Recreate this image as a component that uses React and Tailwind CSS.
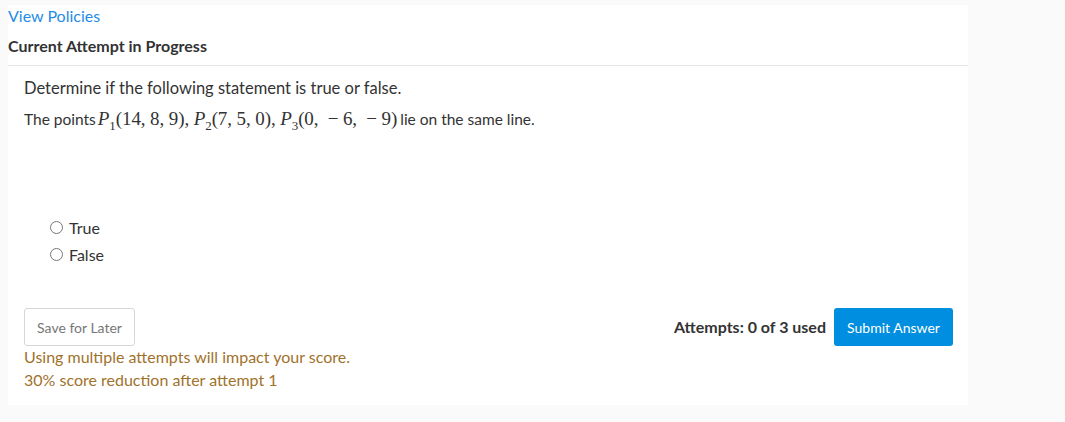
import React from "react";

function Pt({ n }) {
  return (
    <>
      <span className="italic">P</span>
      <sub className="text-[13px] align-[-2px]">{n}</sub>
    </>
  );
}

function Radio({ label }) {
  return (
    <label className="flex items-center gap-[6px] h-[27px]">
      <span className="w-[13px] h-[13px] rounded-full border border-[#767676] bg-white" />
      <span className="text-[16px] text-[#333]">{label}</span>
    </label>
  );
}

export default function App() {
  return (
    <div className="min-h-[422px] bg-[#fafafa] pt-[5px] pl-[8px] pr-[97px] pb-[17px]" style={{ fontFamily: "Lato, 'Open Sans', sans-serif" }}>
      <div className="bg-white w-[960px] h-[400px] flex flex-col">
        <div className="h-[21px] flex items-end">
          <a className="text-[16px] leading-[20px] text-[#1f8ce6] cursor-pointer">View Policies</a>
        </div>
        <div className="h-[40px] flex items-center border-b border-[#e6e6e6]">
          <h2 className="text-[16px] font-bold text-[#333]">Current Attempt in Progress</h2>
        </div>
        <div className="px-[16px] pt-[12px] text-[#333]">
          <p className="text-[16.5px] leading-[20px]">Determine if the following statement is true or false.</p>
          <p className="mt-[10px] text-[15.5px] leading-[22px]">
            The points
            <span className="ml-[2px] mr-[3px] text-[19px] tracking-[-0.1px]" style={{ fontFamily: "'Liberation Serif', 'Times New Roman', serif" }}>
              <Pt n="1" />(14, 8, 9), <Pt n="2" />(7, 5, 0), <Pt n="3" />(0, &nbsp;− 6, &nbsp;− 9)
            </span>
            lie on the same line.
          </p>
          <div className="mt-[84px] pl-[26px] flex flex-col">
            <Radio label="True" />
            <Radio label="False" />
          </div>
          <div className="mt-[40px] flex items-center justify-between">
            <button className="h-[38px] w-[111px] rounded-[3px] border border-[#d6d6d6] bg-white text-[14px] text-[#777]">
              Save for Later
            </button>
            <div className="flex items-center gap-[8px] mr-[-1px]">
              <span className="text-[16px] font-bold text-[#333]">Attempts: 0 of 3 used</span>
              <button className="h-[38px] w-[119px] rounded-[3px] bg-[#008ee0] text-[14px] text-white">
                Submit Answer
              </button>
            </div>
          </div>
          <div className="mt-[-1px] text-[16px] leading-[23px] text-[#9f722c]">
            <p>Using multiple attempts will impact your score.</p>
            <p>30% score reduction after attempt 1</p>
          </div>
        </div>
      </div>
    </div>
  );
}
